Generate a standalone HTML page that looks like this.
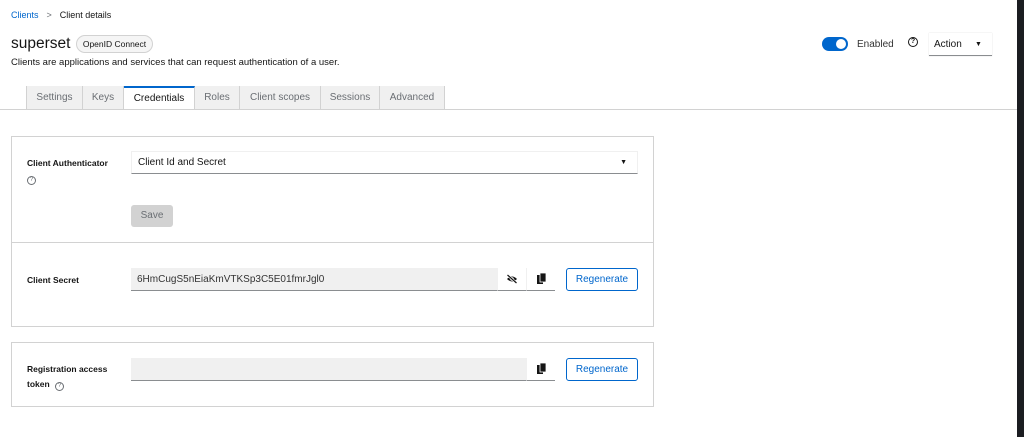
<!DOCTYPE html>
<html><head><meta charset="utf-8"><style>
*{box-sizing:border-box;margin:0;padding:0}
body{width:1024px;height:437px;background:#fff;font-family:"Liberation Sans",sans-serif;color:#151515;position:relative;overflow:hidden;font-size:10px}
.a{position:absolute}
.tab{position:absolute;top:86px;height:23px;background:#f0f0f0;border-right:1px solid #d2d2d2;color:#6a6e73;font-size:10px;line-height:24px;text-align:center}
.lbl{position:absolute;font-size:8.5px;font-weight:bold;color:#151515}
.inp{position:absolute;background:#f0f0f0;border-bottom:1px solid #8a8d90;height:23px}
.btn{position:absolute;border:1px solid #06c;border-radius:3px;color:#06c;font-size:10px;text-align:center;line-height:21px;width:72px;height:23px}
.ib{position:absolute;width:29px;height:23px;background:#fff;border-bottom:1px solid #8a8d90;border-left:1px solid #f0f0f0}
.q{display:inline-block;width:9px;height:9px;border:1px solid #6a6e73;border-radius:50%;font-size:6px;line-height:7px;text-align:center;color:#6a6e73}
</style></head><body>
<div class="a" style="left:11px;top:10px;font-size:9px"><span style="color:#06c">Clients</span><span style="color:#6a6e73;margin:0 8px">&gt;</span>Client details</div>
<div class="a" style="left:11px;top:35px;font-size:15.5px">superset</div>
<div class="a" style="left:76px;top:35px;width:77px;height:18px;border:1px solid #d2d2d2;border-radius:9px;background:#f5f5f5;font-size:8.5px;line-height:16px;text-align:center">OpenID Connect</div>
<div class="a" style="left:11px;top:57px;font-size:9.5px">Clients are applications and services that can request authentication of a user.</div>
<div class="tab" style="left:26px;width:57px;border-left:1px solid #d2d2d2">Settings</div>
<div class="tab" style="left:83px;width:41px">Keys</div>
<div class="tab" style="left:124px;width:71px;background:#fff;color:#151515;border-top:2px solid #06c;height:24px;line-height:21px">Credentials</div>
<div class="tab" style="left:195px;width:45px">Roles</div>
<div class="tab" style="left:240px;width:81px">Client scopes</div>
<div class="tab" style="left:321px;width:59px">Sessions</div>
<div class="tab" style="left:380px;width:65px">Advanced</div>
<div class="a" style="left:0;top:109px;width:1018px;height:1px;background:#d2d2d2"></div>
<div class="a" style="left:822px;top:37px;width:26px;height:14px;border-radius:7px;background:#06c"><div class="a" style="right:2px;top:2px;width:10px;height:10px;border-radius:50%;background:#fff"></div></div>
<div class="a" style="left:857px;top:39px;font-size:10px;color:#333">Enabled</div>
<div class="a" style="left:908px;top:37px;width:10px;height:10px;border:1.5px solid #151515;border-radius:50%;font-size:7px;font-weight:bold;line-height:8px;text-align:center">?</div>
<div class="a" style="left:929px;top:33px;width:63px;height:23px;border-bottom:1px solid #8a8d90;box-shadow:0 0 1px #ccc;font-size:10px;line-height:23px;padding-left:5px">Action<span style="position:absolute;left:46px;top:0;font-size:7px">▼</span></div>
<div class="a" style="left:1017px;top:0;width:7px;height:437px;background:#1b1d21"></div>

<div class="a" style="left:11px;top:136px;width:643px;height:191px;border:1px solid #d2d2d2"></div>
<div class="a" style="left:11px;top:242px;width:643px;height:1px;background:#d2d2d2"></div>
<div class="lbl" style="left:27px;top:158px">Client Authenticator</div>
<div class="a" style="left:27px;top:173px"><span class="q">?</span></div>
<div class="a" style="left:131px;top:151px;width:507px;height:23px;border:1px solid #f0f0f0;border-bottom:1px solid #8a8d90;font-size:10px;line-height:22px;padding-left:6px">Client Id and Secret<span style="position:absolute;right:10px;font-size:7px">▼</span></div>
<div class="a" style="left:131px;top:205px;width:42px;height:22px;background:#d2d2d2;border-radius:3px;color:#6a6e73;font-size:10px;line-height:22px;text-align:center">Save</div>
<div class="lbl" style="left:27px;top:275px">Client Secret</div>
<div class="inp" style="left:131px;top:268px;width:366px;font-size:10px;line-height:23px;padding-left:6px;color:#333">6HmCugS5nEiaKmVTKSp3C5E01fmrJgl0</div>
<div class="ib" style="left:497px;top:268px"><svg style="position:absolute;left:8px;top:6px" width="12" height="10" viewBox="0 0 12 10"><path d="M1 5Q6 0 11 5Q6 10 1 5Z" fill="#151515"/><circle cx="6" cy="5" r="1.8" fill="#fff"/><path d="M1.5 1L10.5 9" stroke="#fff" stroke-width="2.5"/><path d="M1.5 1L10.5 9" stroke="#151515" stroke-width="1.2"/></svg></div>
<div class="ib" style="left:526px;top:268px"><svg style="position:absolute;left:10px;top:5px" width="10" height="12" viewBox="0 0 10 12"><rect x="0" y="2" width="6" height="9" fill="#151515"/><rect x="3" y="0" width="6" height="9" fill="#151515" stroke="#fff" stroke-width=".8"/></svg></div>
<div class="btn" style="left:566px;top:268px">Regenerate</div>

<div class="a" style="left:11px;top:342px;width:643px;height:65px;border:1px solid #d2d2d2"></div>
<div class="lbl" style="left:27px;top:364px">Registration access</div>
<div class="lbl" style="left:27px;top:379px">token <span class="q" style="margin-left:3px;font-weight:normal">?</span></div>
<div class="inp" style="left:131px;top:358px;width:395px"></div>
<div class="ib" style="left:526px;top:358px"><svg style="position:absolute;left:10px;top:5px" width="10" height="12" viewBox="0 0 10 12"><rect x="0" y="2" width="6" height="9" fill="#151515"/><rect x="3" y="0" width="6" height="9" fill="#151515" stroke="#fff" stroke-width=".8"/></svg></div>
<div class="btn" style="left:566px;top:358px">Regenerate</div>
</body></html>
